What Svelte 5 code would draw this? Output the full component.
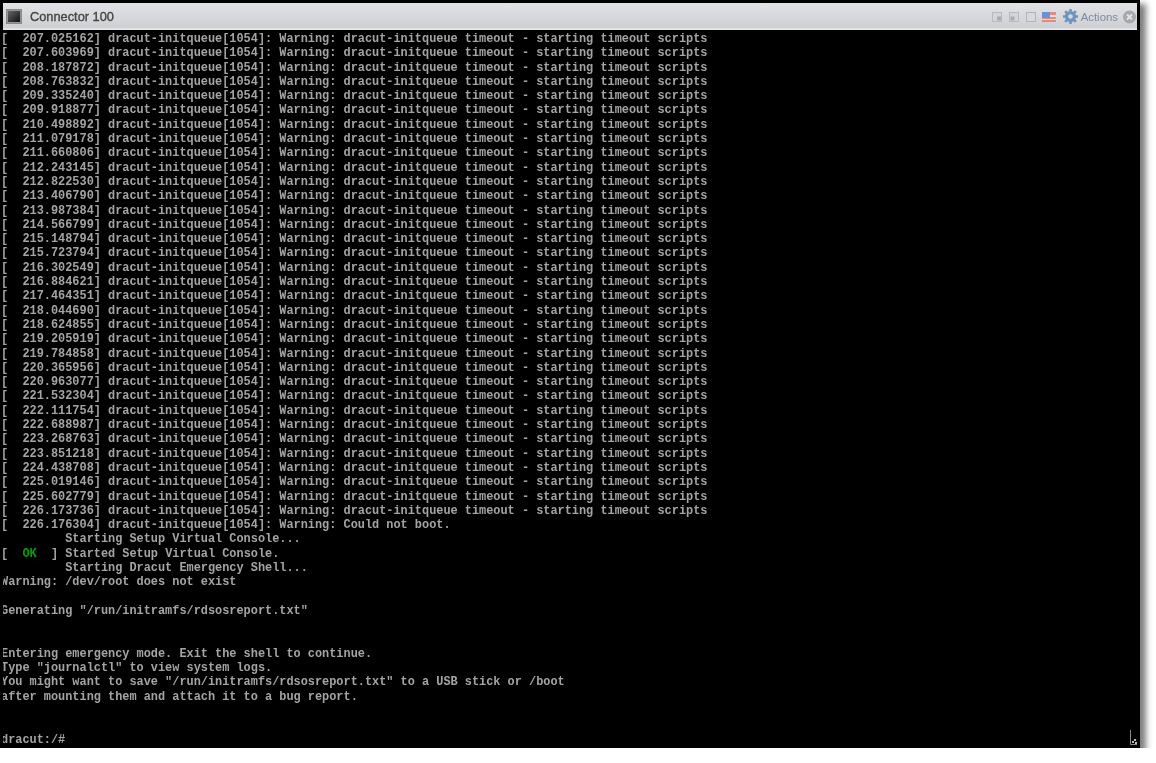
<script>
  const stamps = ['207.025162','207.603969','208.187872','208.763832','209.335240','209.918877','210.498892','211.079178','211.660806','212.243145','212.822530','213.406790','213.987384','214.566799','215.148794','215.723794','216.302549','216.884621','217.464351','218.044690','218.624855','219.205919','219.784858','220.365956','220.963077','221.532304','222.111754','222.688987','223.268763','223.851218','224.438708','225.019146','225.602779','226.173736'];
  const indent = '         ';
</script>

<div class="window">
  <header class="bar">
    <svg class="monitor" width="16" height="15" viewBox="0 0 16 15" aria-hidden="true">
      <defs>
        <linearGradient id="scr" x1="0" y1="0" x2="1" y2="1">
          <stop offset="0" stop-color="#666"/>
          <stop offset="1" stop-color="#111"/>
        </linearGradient>
      </defs>
      <rect x="0.5" y="0.5" width="15" height="14" fill="#979797" stroke="#888"/>
      <rect x="2" y="2" width="12" height="11" fill="url(#scr)"/>
    </svg>
    <span class="title">Connector 100</span>
    <div class="tools">
      <svg class="mini" width="10" height="10" viewBox="0 0 10 10" aria-hidden="true"><rect x=".5" y=".5" width="9" height="9" fill="#d4d5d8" stroke="#b8b9bd"/><rect x="5" y="4.5" width="4" height="4" fill="#aaabaf"/></svg>
      <svg class="mini" width="10" height="10" viewBox="0 0 10 10" aria-hidden="true"><rect x=".5" y=".5" width="9" height="9" fill="#d4d5d8" stroke="#b8b9bd"/><rect x="1.5" y="4.5" width="4" height="4" fill="#aaabaf"/></svg>
      <svg class="mini" width="10" height="10" viewBox="0 0 10 10" aria-hidden="true"><rect x=".5" y=".5" width="9" height="9" fill="#d8d9dc" stroke="#b2b3b7"/></svg>
      <svg class="flag" width="14" height="10" viewBox="0 0 14 10" aria-hidden="true"><rect width="14" height="10" fill="#de8d84"/><rect y="3" width="14" height="2" fill="#ecdcd6"/><rect y="7" width="14" height="1" fill="#ecdcd6"/><rect width="8" height="6" fill="#6a93d6"/></svg>
      <svg class="gear" width="15" height="15" viewBox="0 0 14 14" aria-hidden="true">
        <circle cx="7" cy="7" r="3.7" fill="none" stroke="#6a94c4" stroke-width="3"/>
        <path stroke="#6a94c4" stroke-width="2.4" d="M7 0v2.5M7 11.5V14M0 7h2.5M11.5 7H14M2 2l1.8 1.8M10.2 10.2 12 12M12 2l-1.8 1.8M3.8 10.2 2 12"/>
      </svg>
      <span class="actions">Actions</span>
      <svg class="close" width="13" height="14" viewBox="0 0 13 14" aria-hidden="true">
        <circle cx="6.5" cy="7" r="6.5" fill="#a6a8ac"/>
        <path d="M4 4.5l5 5M9 4.5l-5 5" stroke="#e4e4e6" stroke-width="1.8"/>
      </svg>
    </div>
  </header>
  <main class="term">
    <div class="text">
      {#each stamps as s}
        <div class="ln">[  {s}] dracut-initqueue[1054]: Warning: dracut-initqueue timeout - starting timeout scripts</div>
      {/each}
      <div class="ln">[  226.176304] dracut-initqueue[1054]: Warning: Could not boot.</div>
      <div class="ln">{indent}Starting Setup Virtual Console...</div>
      <div class="ln">{'[  '}<span class="ok">OK</span>{'  ] '}Started Setup Virtual Console.</div>
      <div class="ln">{indent}Starting Dracut Emergency Shell...</div>
      <div class="ln">Warning: /dev/root does not exist</div>
      <div class="ln"></div>
      <div class="ln">Generating "/run/initramfs/rdsosreport.txt"</div>
      <div class="ln"></div>
      <div class="ln"></div>
      <div class="ln">Entering emergency mode. Exit the shell to continue.</div>
      <div class="ln">Type "journalctl" to view system logs.</div>
      <div class="ln">You might want to save "/run/initramfs/rdsosreport.txt" to a USB stick or /boot</div>
      <div class="ln">after mounting them and attach it to a bug report.</div>
      <div class="ln"></div>
      <div class="ln"></div>
      <div class="ln">dracut:/#</div>
    </div>
    <svg class="grip" width="8" height="15" viewBox="0 0 8 15" aria-hidden="true">
      <path d="M1.5 0v14.5H8" fill="none" stroke="#8a8a8a" stroke-width="1"/>
      <path d="M5 9h2v2H5zM3 11h2v2H3zM6 12h2v2H6z" fill="#bdbdbd"/>
    </svg>
  </main>
</div>

<style>
  :global(body) {
    margin: 0;
    background: #fff;
    overflow: hidden;
  }
  .window {
    position: relative;
    width: 1140px;
    height: 748px;
    box-sizing: border-box;
    padding: 3px 3px 0 3px;
    background: #000;
    box-shadow: 5px 5px 6px 1px rgba(40, 40, 40, 0.6);
    display: flex;
    flex-direction: column;
  }
  .bar {
    flex: none;
    height: 27px;
    box-sizing: border-box;
    display: flex;
    align-items: center;
    padding: 0 0 0 3px;
    overflow: hidden;
    background: linear-gradient(#e2e3e6, #cfd0d3 90%, #efefef);
  }
  .monitor {
    margin-right: 8px;
    filter: blur(0.5px);
  }
  .title {
    font: 12.8px "Liberation Sans", Arial, sans-serif;
    -webkit-text-stroke: 0.35px #444;
    color: #444;
    filter: blur(0.4px);
  }
  .tools {
    margin-left: auto;
    display: flex;
    align-items: center;
    filter: blur(0.5px);
  }
  .mini {
    margin-right: 7px;
  }
  .flag {
    margin-left: -1px;
    margin-right: 7px;
  }
  .gear {
    margin-right: 3px;
  }
  .actions {
    font: 11.4px "Liberation Sans", Arial, sans-serif;
    color: #7c8ca2;
    margin-right: 5px;
  }
  .close {
    margin-right: 1px;
  }
  .term {
    flex: 1;
    min-height: 0;
    position: relative;
    overflow: hidden;
    background: #000;
  }
  .text {
    margin: 2px 0 0 -2px;
    filter: blur(0.65px);
    font-family: "Liberation Mono", "DejaVu Sans Mono", monospace;
    font-weight: 700;
    font-size: 11.9px;
    line-height: 14.3px;
    color: #a4a4a4;
  }
  .ln {
    height: 14.3px;
    white-space: pre;
  }
  .ok {
    color: #00a000;
  }
  .grip {
    position: absolute;
    right: 0;
    bottom: 3px;
    filter: blur(0.3px);
  }
</style>
